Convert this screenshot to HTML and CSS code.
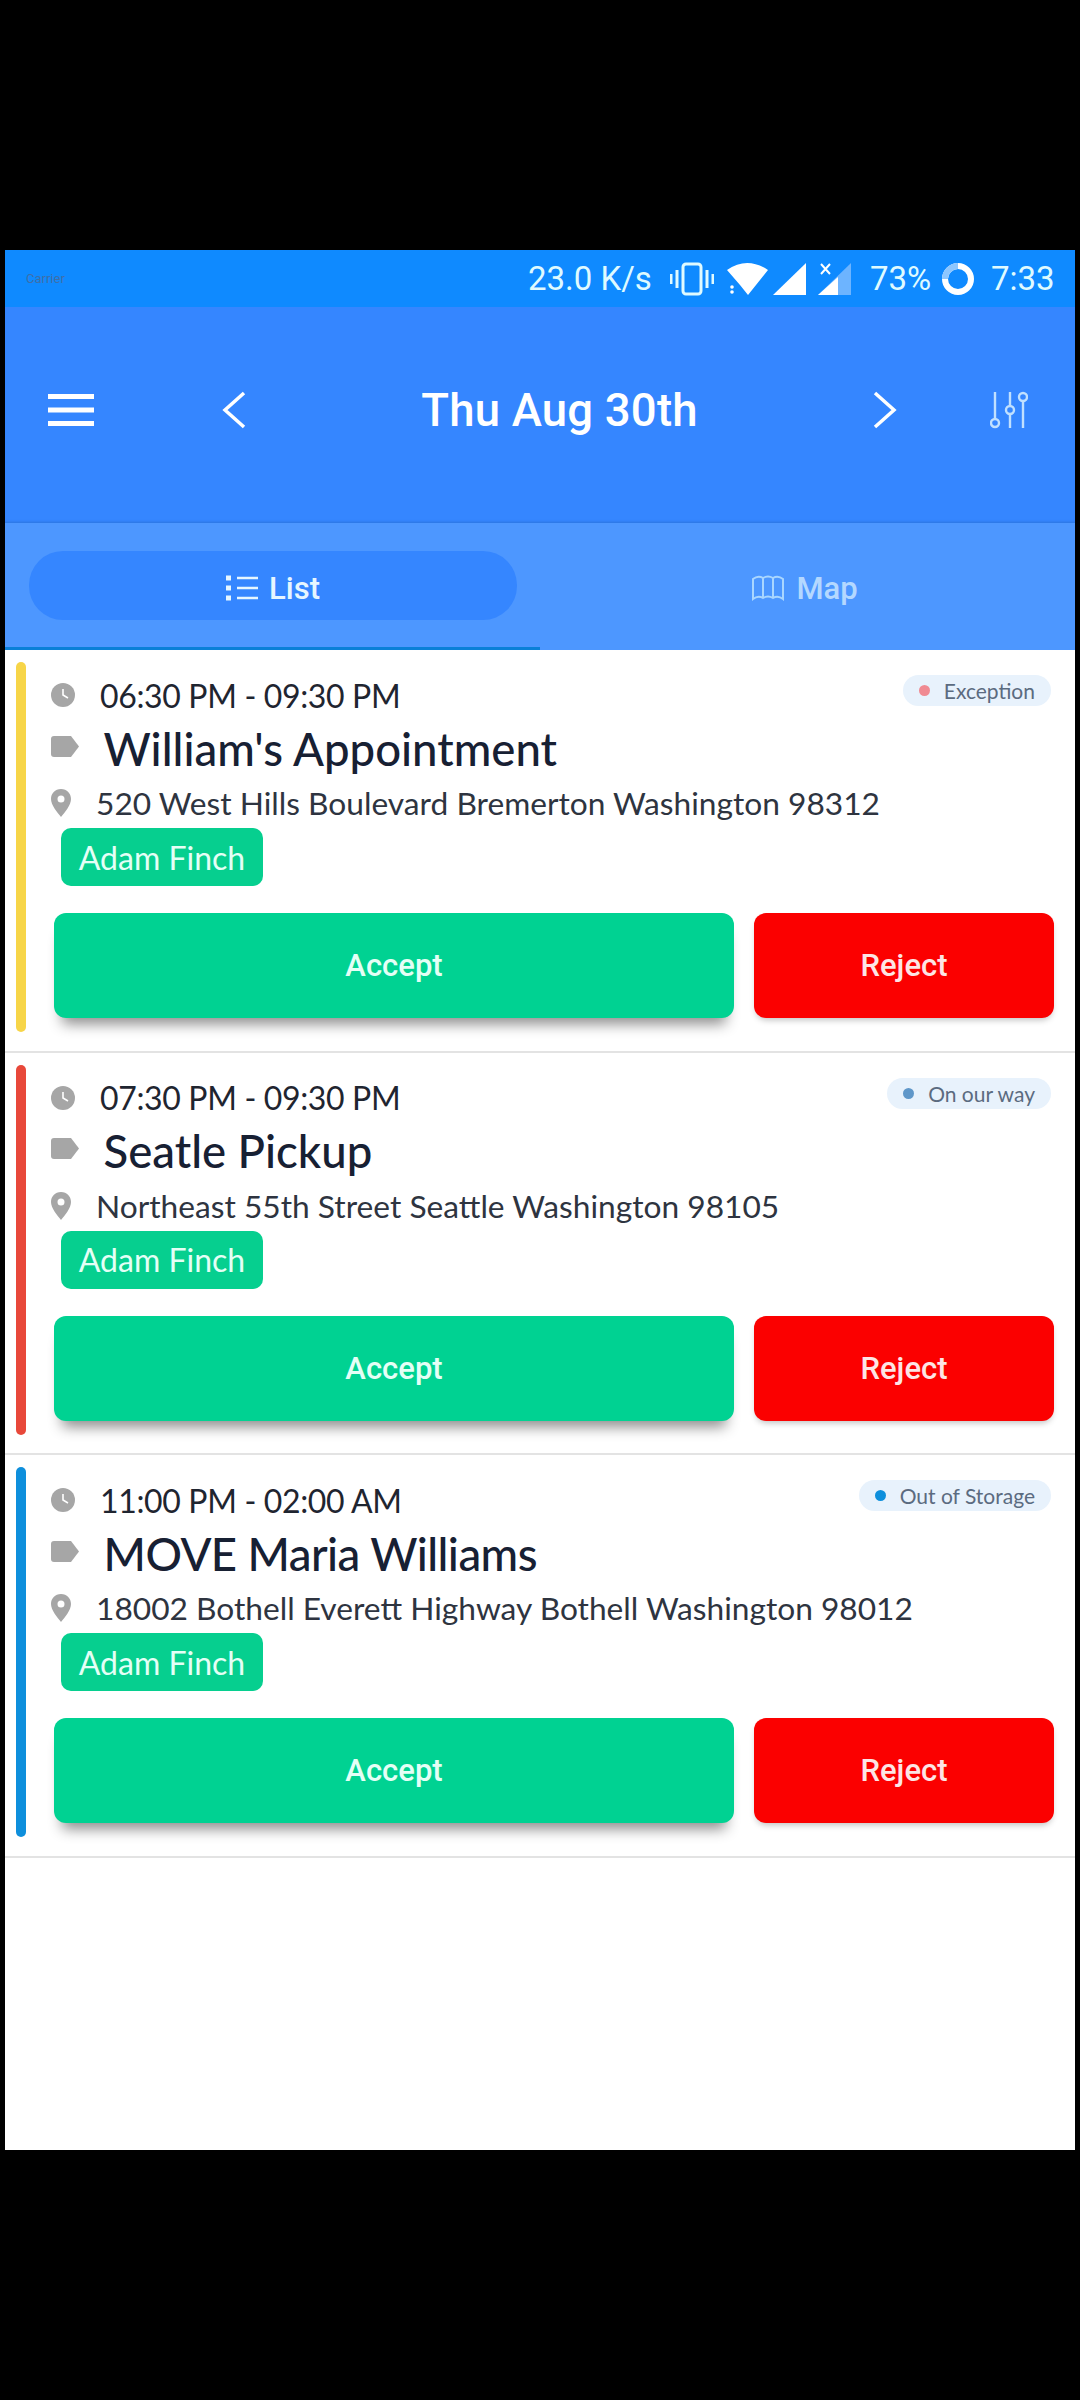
FILE: index.html
```html
<!DOCTYPE html>
<html lang="en">
<head>
    <meta charset="UTF-8">
    <meta name="viewport" content="width=device-width, initial-scale=1.0">
    <title>Schedule</title>
    <link rel="stylesheet" href="styles.css">
</head>
<body>
    <div class="screen">
        <div class="status-bar">
            <span class="carrier">Carrier</span>
            <span class="status-speed">23.0 K/s</span>
            <svg class="ic-vibrate" viewBox="0 0 44 34"><rect x="13" y="2" width="18" height="30" rx="3" fill="none" stroke="#dffaff" stroke-width="3"/><path d="M7 8v18M37 8v18M1 12v10M43 12v10" stroke="#dffaff" stroke-width="3"/></svg>
            <svg class="ic-wifi" viewBox="0 0 41 33"><path d="M0 8Q20-6 41 8L21 33 13 23Z" fill="#fff"/><circle cx="5" cy="25" r="1.800" fill="#fff"/><circle cx="5" cy="30" r="1.800" fill="#fff"/></svg>
            <svg class="ic-signal" viewBox="0 0 33 32"><path d="M33 0V32H0Z" fill="#fff"/></svg>
            <svg class="ic-signal2" viewBox="0 0 33 32"><path d="M33 0V32H0Z" fill="#6db4ff"/><path d="M20 14V32H0Z" fill="#fff"/><path d="M3 1l9 10M12 1L3 11" stroke="#fff" stroke-width="2"/></svg>
            <span class="status-batt">73%</span>
            <svg class="ic-ring" viewBox="0 0 34 34"><circle cx="17" cy="17" r="13" fill="none" stroke="#fff" stroke-width="6"/><path d="M17 4A13 13 0 0 0 4 17" fill="none" stroke="#8cc6ff" stroke-width="6"/></svg>
            <span class="status-time">7:33</span>
        </div>

        <div class="app-header">
            <svg class="ic-menu" viewBox="0 0 46 32"><path d="M0 2.500H46M0 16H46M0 29.500H46" stroke="#fff" stroke-width="5"/></svg>
            <svg class="ic-chev ic-prev" viewBox="0 0 24 38"><path d="M22 2L3 19l19 17" fill="none" stroke="#fff" stroke-width="3.500"/></svg>
            <h1 class="app-date">Thu Aug 30th</h1>
            <svg class="ic-chev ic-next" viewBox="0 0 24 38"><path d="M2 2l19 17L2 36" fill="none" stroke="#fff" stroke-width="3.500"/></svg>
            <svg class="ic-sliders" viewBox="0 0 38 38" fill="none" stroke="#c0e0ff" stroke-width="2.400"><path d="M5 1V27M20 1V14M20 24V37M33 10V37"/><circle cx="5" cy="32" r="4"/><circle cx="20" cy="19" r="4"/><circle cx="33" cy="6" r="4"/></svg>
        </div>

        <div class="tabs">
            <div class="tab tab-active">
                <svg class="ic-list" viewBox="0 0 32 26"><path d="M0 3H5M0 13H5M0 23H5" stroke="#e6f6ff" stroke-width="5"/><path d="M11 3H32M11 13H32M11 23H32" stroke="#e6f6ff" stroke-width="2.500"/></svg>
                <span>List</span>
            </div>
            <div class="tab tab-map">
                <svg class="ic-map" viewBox="0 0 32 26" fill="none" stroke="#a9d6ff" stroke-width="2"><path d="M1 4Q6 0 11 3Q16 0 21 3Q26 0 31 4V24Q26 20 21 23Q16 20 11 23Q6 20 1 24ZM11 3V23M21 3V23"/></svg>
                <span>Map</span>
            </div>
        </div>

        <div class="job job-1">
            <div class="job-bar bar-yellow"></div>
            <div class="job-body">
                <div class="job-time-row">
                    <svg class="ic-clock" viewBox="0 0 24 24"><circle cx="12" cy="12" r="12" fill="#a6a6a6"/><path d="M12 6v6l5 3" fill="none" stroke="#fff" stroke-width="1.600"/></svg>
                    <span class="job-time">06:30 PM - 09:30 PM</span>
                    <span class="badge"><i class="dot dot-red"></i>Exception</span>
                </div>
                <div class="job-title-row">
                    <svg class="ic-tag" viewBox="0 0 28 21"><path d="M3 0H20L28 10.500 20 21H3Q0 21 0 18V3Q0 0 3 0Z" fill="#a6a6a6"/></svg>
                    <span class="job-title">William's Appointment</span>
                </div>
                <div class="job-addr-row">
                    <svg class="ic-pin" viewBox="0 0 20 28"><path fill-rule="evenodd" d="M10 0C4 0 0 4.500 0 10c0 6 6 13 10 18 4-5 10-12 10-18C20 4.500 16 0 10 0ZM10 6.500a3.500 3.500 0 1 1 0 7 3.500 3.500 0 0 1 0-7Z" fill="#a6a6a6"/></svg>
                    <span class="job-addr">520 West Hills Boulevard Bremerton Washington 98312</span>
                </div>
                <span class="chip">Adam Finch</span>
                <div class="job-actions">
                    <button class="btn btn-accept">Accept</button>
                    <button class="btn btn-reject">Reject</button>
                </div>
            </div>
        </div>

        <div class="job">
            <div class="job-bar bar-red"></div>
            <div class="job-body">
                <div class="job-time-row">
                    <svg class="ic-clock" viewBox="0 0 24 24"><circle cx="12" cy="12" r="12" fill="#a6a6a6"/><path d="M12 6v6l5 3" fill="none" stroke="#fff" stroke-width="1.600"/></svg>
                    <span class="job-time">07:30 PM - 09:30 PM</span>
                    <span class="badge"><i class="dot dot-steel"></i>On our way</span>
                </div>
                <div class="job-title-row">
                    <svg class="ic-tag" viewBox="0 0 28 21"><path d="M3 0H20L28 10.500 20 21H3Q0 21 0 18V3Q0 0 3 0Z" fill="#a6a6a6"/></svg>
                    <span class="job-title">Seatle Pickup</span>
                </div>
                <div class="job-addr-row">
                    <svg class="ic-pin" viewBox="0 0 20 28"><path fill-rule="evenodd" d="M10 0C4 0 0 4.500 0 10c0 6 6 13 10 18 4-5 10-12 10-18C20 4.500 16 0 10 0ZM10 6.500a3.500 3.500 0 1 1 0 7 3.500 3.500 0 0 1 0-7Z" fill="#a6a6a6"/></svg>
                    <span class="job-addr">Northeast 55th Street Seattle Washington 98105</span>
                </div>
                <span class="chip">Adam Finch</span>
                <div class="job-actions">
                    <button class="btn btn-accept">Accept</button>
                    <button class="btn btn-reject">Reject</button>
                </div>
            </div>
        </div>

        <div class="job">
            <div class="job-bar bar-blue"></div>
            <div class="job-body">
                <div class="job-time-row">
                    <svg class="ic-clock" viewBox="0 0 24 24"><circle cx="12" cy="12" r="12" fill="#a6a6a6"/><path d="M12 6v6l5 3" fill="none" stroke="#fff" stroke-width="1.600"/></svg>
                    <span class="job-time">11:00 PM - 02:00 AM</span>
                    <span class="badge"><i class="dot dot-blue"></i>Out of Storage</span>
                </div>
                <div class="job-title-row">
                    <svg class="ic-tag" viewBox="0 0 28 21"><path d="M3 0H20L28 10.500 20 21H3Q0 21 0 18V3Q0 0 3 0Z" fill="#a6a6a6"/></svg>
                    <span class="job-title job-title-caps">MOVE Maria Williams</span>
                </div>
                <div class="job-addr-row">
                    <svg class="ic-pin" viewBox="0 0 20 28"><path fill-rule="evenodd" d="M10 0C4 0 0 4.500 0 10c0 6 6 13 10 18 4-5 10-12 10-18C20 4.500 16 0 10 0ZM10 6.500a3.500 3.500 0 1 1 0 7 3.500 3.500 0 0 1 0-7Z" fill="#a6a6a6"/></svg>
                    <span class="job-addr">18002 Bothell Everett Highway Bothell Washington 98012</span>
                </div>
                <span class="chip">Adam Finch</span>
                <div class="job-actions">
                    <button class="btn btn-accept">Accept</button>
                    <button class="btn btn-reject">Reject</button>
                </div>
            </div>
        </div>
    </div>
</body>
</html>
```

FILE: styles.css
```css
html, body {
    height: 100%;
}

body {
    margin: 0;
    padding: 250px 5px 250px;
    box-sizing: border-box;
    background: #000;
    font-family: "Lato", Arial, sans-serif;
    overflow: hidden;
}

.screen {
    height: 1900px;
    background: #fff;
}

/* status bar */
.status-bar {
    height: 57px;
    background: #0f8aff;
    display: flex;
    align-items: center;
    padding-left: 21px;
    color: #dffaff;
    font-family: "Roboto", Arial, sans-serif;
    font-size: 33px;
}

.carrier {
    width: 502px;
    font-size: 13px;
    color: #3f6fa8;
}

.status-speed {
    width: 142px;
}

.ic-vibrate {
    width: 44px;
    height: 34px;
    margin-right: 13px;
}

.ic-wifi {
    width: 41px;
    height: 33px;
    margin-right: 5px;
}

.ic-signal,
.ic-signal2 {
    width: 33px;
    height: 32px;
}

.ic-signal {
    margin-right: 12px;
}

.ic-signal2 {
    margin-right: 19px;
}

.status-batt {
    width: 71px;
}

.ic-ring {
    width: 34px;
    height: 34px;
    margin-right: 16px;
}

/* header */
.app-header {
    height: 216px;
    background: #3586ff;
    display: flex;
    align-items: center;
    box-sizing: border-box;
    padding: 0 0 10px 43px;
    box-shadow: inset 0 -3px 3px -2px #2c74de;
}

.ic-menu {
    width: 46px;
    height: 32px;
    margin-right: 128px;
}

.ic-chev {
    width: 24px;
    height: 38px;
}

.app-date {
    width: 627px;
    margin: 0;
    text-align: center;
    color: #fff;
    font-family: "Roboto", Arial, sans-serif;
    font-size: 45.5px;
    font-weight: 500;
    letter-spacing: 0.2px;
}

.ic-next {
    margin-right: 93px;
}

.ic-sliders {
    width: 38px;
    height: 38px;
}

/* tabs */
.tabs {
    height: 127px;
    box-sizing: border-box;
    background: #4d97ff;
    display: flex;
    padding: 28px 0 30px 24px;
    position: relative;
}

.tabs::after {
    content: "";
    position: absolute;
    left: 0;
    bottom: 0;
    width: 535px;
    height: 3px;
    background: #0a80d8;
}

.tab {
    display: flex;
    align-items: center;
    justify-content: center;
    padding-top: 5px;
    color: #e6f6ff;
    font-family: "Roboto", Arial, sans-serif;
    font-size: 31px;
    font-weight: 500;
}

.tab-active {
    width: 488px;
    background: #3586ff;
    border-radius: 34px;
    gap: 11px;
}

.tab-map {
    width: 540px;
    margin-left: 18px;
    gap: 12px;
    color: #b4d8ff;
}

.ic-list,
.ic-map {
    width: 32px;
    height: 26px;
}

/* job cards */
.job {
    height: 402.5px;
    box-sizing: border-box;
    padding: 12px 21px 18.5px 11px;
    border-bottom: 2px solid #e3e3e3;
    display: flex;
}

.job-bar {
    width: 10px;
    border-radius: 5px;
    flex-shrink: 0;
}

.bar-yellow {
    background: #f7d548;
}

.bar-red {
    background: #e8483a;
}

.bar-blue {
    background: #0e8fdc;
}

.job-body {
    flex: 1;
    margin-left: 25px;
    padding-top: 12px;
    display: flex;
    flex-direction: column;
    align-items: flex-start;
}

.job-time-row,
.job-title-row,
.job-addr-row {
    display: flex;
    align-items: center;
    align-self: stretch;
}

.job-time-row {
    height: 42px;
}

.ic-clock {
    width: 24px;
    height: 24px;
    margin-right: 25px;
}

.job-time {
    font-size: 32px;
    color: #1f2530;
    letter-spacing: -0.35px;
}

.badge {
    height: 31px;
    margin-left: auto;
    margin-right: 3px;
    margin-top: -9px;
    padding: 0 16px;
    background: #e8f2fc;
    border-radius: 16px;
    display: flex;
    align-items: center;
    gap: 14px;
    color: #5b6b80;
    font-size: 21px;
}

.dot {
    width: 11px;
    height: 11px;
    border-radius: 50%;
}

.dot-red {
    background: #f08a92;
}

.dot-steel {
    background: #5f97c9;
}

.dot-blue {
    background: #0e8fdc;
}

.job-title-row {
    height: 54px;
    margin-top: 5px;
}

.ic-tag {
    width: 28px;
    height: 21px;
    margin-right: 24.5px;
    margin-bottom: 4px;
}

.job-title {
    font-size: 45.5px;
    font-weight: 500;
    color: #172033;
}

.job-title-caps {
    letter-spacing: -0.55px;
}

.job-addr-row {
    height: 46px;
    margin-top: 5px;
}

.ic-pin {
    width: 20px;
    height: 28px;
    margin-right: 25px;
}

.job-addr {
    font-size: 31.7px;
    color: #2e3440;
}

.chip {
    margin: 2px 0 0 10px;
    height: 58px;
    width: 202px;
    background: #06cf8f;
    border-radius: 10px;
    display: flex;
    align-items: center;
    justify-content: center;
    color: #e4fff6;
    font-size: 32px;
}

.job-actions {
    display: flex;
    align-self: stretch;
    gap: 20px;
    margin: 27px 0 0 3px;
}

.btn {
    height: 105px;
    border: none;
    border-radius: 12px;
    color: #e4fff6;
    font-family: "Roboto", Arial, sans-serif;
    font-size: 31px;
    font-weight: 500;
    padding: 0;
}

.btn-accept {
    width: 680px;
    background: #00d292;
    box-shadow: 0 14px 14px -8px rgba(0, 0, 0, 0.45);
}

.btn-reject {
    width: 300px;
    background: #fb0000;
    color: #fde5e5;
    box-shadow: 0 4px 6px -2px rgba(0, 0, 0, 0.25);
}
```
